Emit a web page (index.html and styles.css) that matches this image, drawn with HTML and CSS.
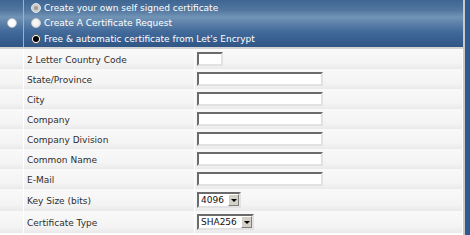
FILE: index.html
```html
<!DOCTYPE html>
<html lang="en">
<head>
    <meta charset="UTF-8">
    <title>Certificate</title>
    <link rel="stylesheet" href="styles.css">
</head>
<body>
<div class="page">
    <div class="panel">
        <div class="head">
            <div class="headSide"><span class="radio plain"></span></div>
            <div class="headMain">
                <div class="opt first"><span class="radio dim"></span>Create your own self signed certificate</div>
                <div class="opt"><span class="radio light"></span>Create A Certificate Request</div>
                <div class="opt"><span class="radio on"></span>Free &amp; automatic certificate from Let's Encrypt</div>
            </div>
        </div>

        <div class="row">
            <div class="side"></div>
            <div class="label">2 Letter Country Code</div>
            <div class="field"><input type="text" class="txt short"></div>
        </div>
        <div class="row">
            <div class="side"></div>
            <div class="label">State/Province</div>
            <div class="field"><input type="text" class="txt"></div>
        </div>
        <div class="row">
            <div class="side"></div>
            <div class="label">City</div>
            <div class="field"><input type="text" class="txt"></div>
        </div>
        <div class="row">
            <div class="side"></div>
            <div class="label">Company</div>
            <div class="field"><input type="text" class="txt"></div>
        </div>
        <div class="row">
            <div class="side"></div>
            <div class="label">Company Division</div>
            <div class="field"><input type="text" class="txt"></div>
        </div>
        <div class="row">
            <div class="side"></div>
            <div class="label">Common Name</div>
            <div class="field"><input type="text" class="txt"></div>
        </div>
        <div class="row">
            <div class="side"></div>
            <div class="label">E-Mail</div>
            <div class="field"><input type="text" class="txt"></div>
        </div>
        <div class="row tall">
            <div class="side"></div>
            <div class="label">Key Size (bits)</div>
            <div class="field">
                <div class="select keySize"><span class="val">4096</span><span class="btn"></span></div>
            </div>
        </div>
        <div class="row tall">
            <div class="side"></div>
            <div class="label">Certificate Type</div>
            <div class="field">
                <div class="select certType"><span class="val">SHA256</span><span class="btn"></span></div>
            </div>
        </div>
    </div>
    <div class="edge"></div>
</div>
</body>
</html>
```

FILE: styles.css
```css
*{
    box-sizing: border-box;
}
body{
    margin: 0;
    background-color: #fff;
    font-family: "DejaVu Sans", Verdana, sans-serif;
    font-size: 9px;
    color: #2e2e2e;
}
.page{
    display: flex;
    height: 235px;
    overflow: hidden;
}
.panel{
    width: 463px;
}
.edge{
    width: 7px;
    border-left: 2px solid #c9c9c9;
    background-color: #2f5a8b;
}
.head{
    display: flex;
    height: 49px;
    border-bottom: 2px solid #d4d4d4;
}
.headSide, .headMain{
    background: linear-gradient(to bottom, #3f6593 0%, #52779f 22%, #7194b6 36%, #5c80a8 50%, #41699a 68%, #2f5685 100%);
}
.headSide{
    width: 24px;
    border-right: 1px solid #9fb1c6;
    display: flex;
    align-items: center;
    justify-content: center;
}
.headMain{
    flex: 1;
    padding-left: 7px;
    color: #fff;
}
.opt{
    display: flex;
    align-items: center;
    height: 16px;
}
.opt.first{
    height: 15px;
}
.radio{
    display: inline-block;
    width: 10px;
    height: 10px;
    border-radius: 50%;
    margin-right: 3px;
    position: relative;
}
.radio.plain{
    margin: 0 0 2px 1px;
    background: radial-gradient(circle at 40% 40%, #fff 0%, #fff 55%, #dde3ea 100%);
    border: 1px solid #b9c3cf;
}
.radio.dim{
    background-color: #cfcfcf;
    border: 1px solid #e4e4e4;
}
.radio.dim::after{
    content: "";
    position: absolute;
    left: 2px;
    top: 2px;
    width: 4px;
    height: 4px;
    border-radius: 50%;
    background-color: #9a9a9a;
}
.radio.light{
    background: radial-gradient(circle at 40% 40%, #fafafa 0%, #e6e6e6 100%);
    border: 1px solid #cfcfcf;
}
.radio.on{
    background-color: #fff;
    border: 1px solid #555;
}
.radio.on::after{
    content: "";
    position: absolute;
    left: 1px;
    top: 1px;
    width: 6px;
    height: 6px;
    border-radius: 50%;
    background-color: #000;
}
.row{
    display: flex;
    height: 20px;
}
.row.tall{
    height: 22px;
}
.row > div{
    background: linear-gradient(to bottom, #f9f9f9 0%, #f4f4f4 70%, #eaeaea 100%);
    border-right: 1px solid #fff;
}
.side{
    width: 24px;
}
.label{
    width: 171px;
    padding-left: 3px;
    display: flex;
    align-items: center;
    padding-top: 1px;
}
.field{
    flex: 1;
    padding: 3px 2px;
}
.txt{
    display: block;
    width: 126px;
    height: 14px;
    padding: 0;
    margin: 0;
    background-color: #fff;
    border: 2px solid;
    border-color: #6b6b6b #e2e2e2 #e2e2e2 #6b6b6b;
}
.txt.short{
    width: 26px;
}
.select{
    display: flex;
    align-items: center;
    height: 16px;
    background-color: #fff;
    border: 2px solid;
    border-color: #6b6b6b #e2e2e2 #e2e2e2 #6b6b6b;
    color: #111;
}
.keySize{
    width: 44px;
}
.certType{
    width: 57px;
}
.val{
    flex: 1;
    padding-left: 2px;
}
.btn{
    width: 11px;
    height: 12px;
    background-color: #d4d0c8;
    border: 1px solid;
    border-color: #fff #808080 #808080 #fff;
    display: flex;
    align-items: center;
    justify-content: center;
}
.btn::after{
    content: "";
    border-left: 3px solid transparent;
    border-right: 3px solid transparent;
    border-top: 3px solid #000;
}
```
